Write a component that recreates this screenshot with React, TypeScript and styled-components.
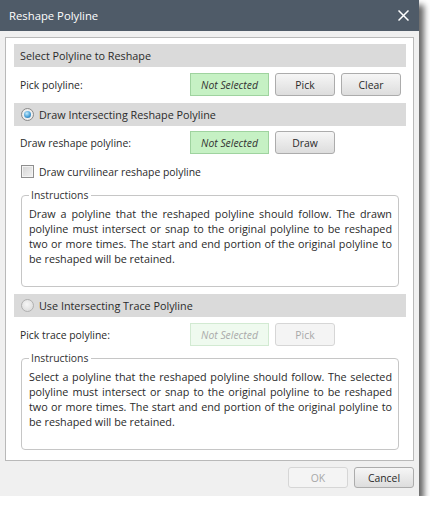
import styled, { createGlobalStyle } from "styled-components";

const GlobalStyle = createGlobalStyle`
  html, body {
    margin: 0;
    padding: 0;
    background: #ffffff;
  }
  body {
    font-family: "Open Sans", "Noto Sans", sans-serif;
    font-size: 10.4px;
    color: #2a2a2a;
  }
`;

const Window = styled.div`
  width: 419px;
  height: 496px;
  background: #f0f0f0;
  box-shadow: 5px 5px 6px 0 rgba(0, 0, 0, 0.6);
  display: flex;
  flex-direction: column;
`;

const TitleBar = styled.div`
  height: 31px;
  flex-shrink: 0;
  background: #4f5b68;
  color: #ffffff;
  font-size: 11.3px;
  display: flex;
  align-items: center;
  justify-content: space-between;
  padding: 0 10px 0 9px;
`;

const CloseIcon = styled.svg`
  width: 11px;
  height: 11px;
`;

const Body = styled.div`
  padding: 6px 5px 0 5px;
  display: flex;
  flex-direction: column;
`;

const Panel = styled.div`
  box-sizing: border-box;
  height: 424px;
  background: #ffffff;
  border: 1px solid #b9b9b9;
  padding: 6px 7px 0 8px;
  display: flex;
  flex-direction: column;
`;

const SectionHeader = styled.div<{ $mt?: number; $radio?: boolean }>`
  height: 23px;
  margin-top: ${(p) => p.$mt ?? 0}px;
  background: #dadada;
  display: flex;
  align-items: center;
  gap: 5px;
  padding-left: ${(p) => (p.$radio ? 7 : 6)}px;
  font-size: 10.8px;
`;

const Radio = styled.span<{ $checked?: boolean }>`
  box-sizing: border-box;
  width: 13px;
  height: 13px;
  border-radius: 50%;
  border: 1px solid ${(p) => (p.$checked ? "#8a8a8a" : "#b0b0b0")};
  background: ${(p) =>
    p.$checked
      ? "radial-gradient(circle, #ffffff 0%, #e2e2e2 100%)"
      : "radial-gradient(circle at 45% 40%, #f6f6f6 0%, #d6d6d6 100%)"};
  display: flex;
  align-items: center;
  justify-content: center;

  &::after {
    content: "";
    display: ${(p) => (p.$checked ? "block" : "none")};
    width: 7px;
    height: 7px;
    border-radius: 50%;
    background: radial-gradient(circle at 40% 35%, #c4ecfd 0%, #4aa0d6 55%, #1d6098 100%);
  }
`;

const Row = styled.div<{ $mt?: number }>`
  height: 23px;
  margin-top: ${(p) => p.$mt ?? 0}px;
  display: grid;
  grid-template-columns: 1fr 79px 60px 60px;
  column-gap: 6px;
  align-items: center;
  padding: 0 5px 0 6px;
`;

const Label = styled.span`
  white-space: nowrap;
`;

const Status = styled.div<{ $disabled?: boolean }>`
  box-sizing: border-box;
  height: 23px;
  display: flex;
  align-items: center;
  justify-content: center;
  font-style: italic;
  background: ${(p) => (p.$disabled ? "#effaef" : "#c6f1c4")};
  border: 1px solid ${(p) => (p.$disabled ? "#d2ead2" : "#9fd39f")};
  color: ${(p) => (p.$disabled ? "#aaaaaa" : "#333333")};
`;

const Button = styled.button<{ $h?: number }>`
  box-sizing: border-box;
  height: ${(p) => p.$h ?? 23}px;
  width: 60px;
  padding: 0;
  font: inherit;
  color: #2a2a2a;
  border: 1px solid #acacac;
  border-radius: 3px;
  background: linear-gradient(#f6f6f6, #dddddd);

  &:disabled {
    color: #a8a8a8;
    border-color: #d6d6d6;
    background: #f4f4f4;
  }
`;

const CheckRow = styled.label`
  margin-top: 10px;
  height: 15px;
  display: flex;
  align-items: center;
  gap: 5px;
  padding-left: 7px;
`;

const Checkbox = styled.span`
  box-sizing: border-box;
  width: 13px;
  height: 13px;
  border: 1px solid #8f8f8f;
  background: linear-gradient(135deg, #d4d4d4, #f2f2f2);
  box-shadow: inset 0 0 0 1px #f4f4f4;
`;

const GroupBox = styled.fieldset<{ $mt?: number }>`
  box-sizing: border-box;
  margin: ${(p) => p.$mt ?? 0}px 7px 0 7px;
  height: 99px;
  padding: 3px 6px 0 7px;
  border: 1px solid #c6c6c6;
  border-radius: 4px;
  min-width: 0;
`;

const Legend = styled.legend`
  padding: 0 3px 0 2px;
  line-height: 15px;
  color: #333333;
`;

const Line = styled.div<{ $last?: boolean }>`
  line-height: 15px;
  white-space: nowrap;
  font-size: 10.8px;
  text-align: ${(p) => (p.$last ? "left" : "justify")};
  text-align-last: ${(p) => (p.$last ? "left" : "justify")};
`;

const Footer = styled.div`
  margin-top: 6px;
  display: flex;
  justify-content: flex-end;
  gap: 6px;
`;

const drawLines = [
  "Draw a polyline that the reshaped polyline should follow. The drawn",
  "polyline must intersect or snap to the original polyline to be reshaped",
  "two or more times. The start and end portion of the original polyline to",
  "be reshaped will be retained.",
];

const traceLines = [
  "Select a polyline that the reshaped polyline should follow. The selected",
  "polyline must intersect or snap to the original polyline to be reshaped",
  "two or more times. The start and end portion of the original polyline to",
  "be reshaped will be retained.",
];

function Instructions({ lines, mt }: { lines: string[]; mt: number }) {
  return (
    <GroupBox $mt={mt}>
      <Legend>Instructions</Legend>
      {lines.map((l, i) => (
        <Line key={i} $last={i === lines.length - 1}>
          {l}
        </Line>
      ))}
    </GroupBox>
  );
}

export default function App() {
  return (
    <>
      <GlobalStyle />
      <Window>
        <TitleBar>
          <span>Reshape Polyline</span>
          <CloseIcon viewBox="0 0 11 11">
            <path d="M0.5 0.5 L10.5 10.5 M10.5 0.5 L0.5 10.5" stroke="#ffffff" strokeWidth="1.5" fill="none" />
          </CloseIcon>
        </TitleBar>
        <Body>
          <Panel>
            <SectionHeader>Select Polyline to Reshape</SectionHeader>
            <Row $mt={6}>
              <Label>Pick polyline:</Label>
              <Status>Not Selected</Status>
              <Button>Pick</Button>
              <Button>Clear</Button>
            </Row>

            <SectionHeader $mt={7} $radio>
              <Radio $checked />
              Draw Intersecting Reshape Polyline
            </SectionHeader>
            <Row $mt={5}>
              <Label>Draw reshape polyline:</Label>
              <Status>Not Selected</Status>
              <Button>Draw</Button>
            </Row>
            <CheckRow>
              <Checkbox />
              Draw curvilinear reshape polyline
            </CheckRow>
            <Instructions lines={drawLines} mt={9} />

            <SectionHeader $mt={7} $radio>
              <Radio />
              Use Intersecting Trace Polyline
            </SectionHeader>
            <Row $mt={6}>
              <Label>Pick trace polyline:</Label>
              <Status $disabled>Not Selected</Status>
              <Button disabled>Pick</Button>
            </Row>
            <Instructions lines={traceLines} mt={5} />
          </Panel>
          <Footer>
            <Button $h={21} disabled>
              OK
            </Button>
            <Button $h={21}>Cancel</Button>
          </Footer>
        </Body>
      </Window>
    </>
  );
}
